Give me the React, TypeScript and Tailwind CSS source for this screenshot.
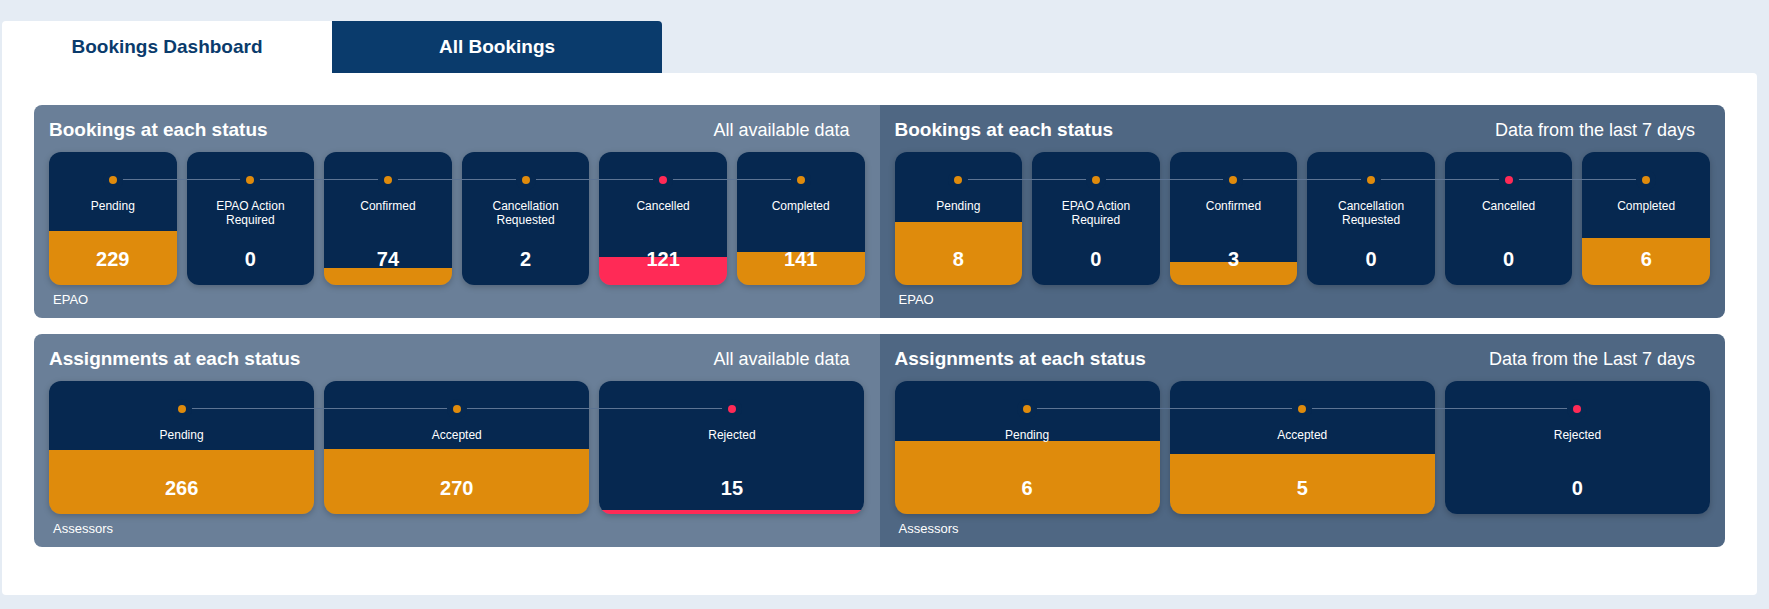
import React from "react";

type Item = { label: string; value: number; red?: boolean };

const NAVY = "#062850";
const ORANGE = "#df8b0c";
const RED = "#ff2a56";

function Half({
  title,
  subtitle,
  footer,
  items,
  bg,
  lineClass,
  cols,
}: {
  title: string;
  subtitle: string;
  footer: string;
  items: Item[];
  bg: string;
  lineClass: string;
  cols: string;
}) {
  const total = items.reduce((s, i) => s + i.value, 0);
  return (
    <div className={`flex-1 px-[15px] pt-[13px] pb-[11px] ${bg}`}>
      <div className="flex items-center justify-between h-[24px]">
        <div className="text-[19px] font-bold text-white leading-[24px]">{title}</div>
        <div className="text-[18px] text-white leading-[24px] pr-[15px]">{subtitle}</div>
      </div>
      <div className={`relative mt-[10px] grid gap-[10px] ${cols}`}>
        {items.map((it) => {
          const p = total > 0 ? (it.value / total) * 100 : 0;
          const fill = it.red ? RED : ORANGE;
          return (
            <div
              key={it.label}
              className="h-[133px] rounded-xl shadow-[0_2px_6px_rgba(0,0,0,0.22)] flex flex-col items-center pt-[24px]"
              style={{
                background: `linear-gradient(to top, ${fill} ${p}%, ${NAVY} ${p}%)`,
              }}
            >
              <div
                className={`relative z-10 w-[8px] h-[8px] rounded-full ring-[6px] ring-[#062850] ${
                  it.red ? "bg-[#ff2a56]" : "bg-[#df8b0c]"
                }`}
              />
              <div className="mt-[15px] h-[28px] px-[8px] text-center text-[12px] leading-[14px] text-white whitespace-pre-line">
                {it.label}
              </div>
              <div className="mt-[20px] text-[20px] font-bold leading-[24px] text-white">
                {it.value}
              </div>
            </div>
          );
        })}
        <div className={`absolute top-[27px] h-px bg-[#5d7493] ${lineClass}`} />
      </div>
      <div className="mt-[7px] pl-[4px] text-[13px] leading-[15px] text-white">{footer}</div>
    </div>
  );
}

export default function App() {
  const bookingsAll: Item[] = [
    { label: "Pending", value: 229 },
    { label: "EPAO Action\nRequired", value: 0 },
    { label: "Confirmed", value: 74 },
    { label: "Cancellation\nRequested", value: 2 },
    { label: "Cancelled", value: 121, red: true },
    { label: "Completed", value: 141 },
  ];
  const bookings7: Item[] = [
    { label: "Pending", value: 8 },
    { label: "EPAO Action\nRequired", value: 0 },
    { label: "Confirmed", value: 3 },
    { label: "Cancellation\nRequested", value: 0 },
    { label: "Cancelled", value: 0, red: true },
    { label: "Completed", value: 6 },
  ];
  const assignAll: Item[] = [
    { label: "Pending", value: 266 },
    { label: "Accepted", value: 270 },
    { label: "Rejected", value: 15, red: true },
  ];
  const assign7: Item[] = [
    { label: "Pending", value: 6 },
    { label: "Accepted", value: 5 },
    { label: "Rejected", value: 0, red: true },
  ];
  const line6 = "left-[calc((100%_-_50px)/12)] right-[calc((100%_-_50px)/12)]";
  const line3 = "left-[calc((100%_-_20px)/6)] right-[calc((100%_-_20px)/6)]";

  return (
    <div
      className="min-h-[609px] bg-[#e5ecf4] pl-[2px] pr-[12px] pt-[21px] pb-[15px]"
      style={{ fontFamily: '"Liberation Sans", Arial, sans-serif' }}
    >
      <div className="flex">
        <div className="w-[330px] h-[52px] bg-white rounded-tl-[4px] flex items-center justify-center text-[19px] font-bold text-[#0a3b6c]">
          Bookings Dashboard
        </div>
        <div className="w-[330px] h-[52px] bg-[#0a3b6c] rounded-tr-[4px] flex items-center justify-center text-[19px] font-bold text-white">
          All Bookings
        </div>
      </div>
      <div className="bg-white rounded-tr-[4px] rounded-b-[4px] px-[32px] pt-[32px] pb-[32px]">
        <div className="flex rounded-lg overflow-hidden mb-[16px]">
          <Half
            title="Bookings at each status"
            subtitle="All available data"
            footer="EPAO"
            items={bookingsAll}
            bg="bg-[#6a7f98]"
            lineClass={line6}
            cols="grid-cols-6"
          />
          <Half
            title="Bookings at each status"
            subtitle="Data from the last 7 days"
            footer="EPAO"
            items={bookings7}
            bg="bg-[#4f6783]"
            lineClass={line6}
            cols="grid-cols-6"
          />
        </div>
        <div className="flex rounded-lg overflow-hidden mb-[16px]">
          <Half
            title="Assignments at each status"
            subtitle="All available data"
            footer="Assessors"
            items={assignAll}
            bg="bg-[#6a7f98]"
            lineClass={line3}
            cols="grid-cols-3"
          />
          <Half
            title="Assignments at each status"
            subtitle="Data from the Last 7 days"
            footer="Assessors"
            items={assign7}
            bg="bg-[#4f6783]"
            lineClass={line3}
            cols="grid-cols-3"
          />
        </div>
      </div>
    </div>
  );
}
